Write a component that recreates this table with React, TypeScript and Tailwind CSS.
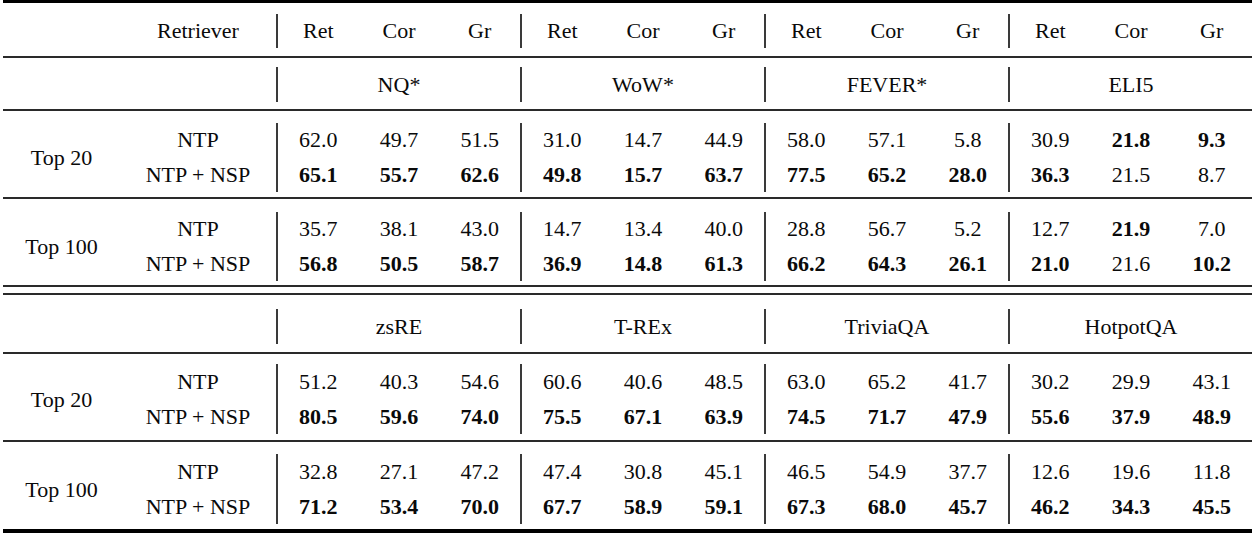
import React from "react";

type Row = string[];

const top20a: Row[] = [
  ["62.0", "49.7", "51.5", "31.0", "14.7", "44.9", "58.0", "57.1", "5.8", "30.9", "!21.8", "!9.3"],
  ["!65.1", "!55.7", "!62.6", "!49.8", "!15.7", "!63.7", "!77.5", "!65.2", "!28.0", "!36.3", "21.5", "8.7"],
];
const top100a: Row[] = [
  ["35.7", "38.1", "43.0", "14.7", "13.4", "40.0", "28.8", "56.7", "5.2", "12.7", "!21.9", "7.0"],
  ["!56.8", "!50.5", "!58.7", "!36.9", "!14.8", "!61.3", "!66.2", "!64.3", "!26.1", "!21.0", "21.6", "!10.2"],
];
const top20b: Row[] = [
  ["51.2", "40.3", "54.6", "60.6", "40.6", "48.5", "63.0", "65.2", "41.7", "30.2", "29.9", "43.1"],
  ["!80.5", "!59.6", "!74.0", "!75.5", "!67.1", "!63.9", "!74.5", "!71.7", "!47.9", "!55.6", "!37.9", "!48.9"],
];
const top100b: Row[] = [
  ["32.8", "27.1", "47.2", "47.4", "30.8", "45.1", "46.5", "54.9", "37.7", "12.6", "19.6", "11.8"],
  ["!71.2", "!53.4", "!70.0", "!67.7", "!58.9", "!59.1", "!67.3", "!68.0", "!45.7", "!46.2", "!34.3", "!45.5"],
];

function Rule({ cls }: { cls: string }) {
  return <div className={cls} />;
}

function Cell({ v }: { v: string }) {
  const bold = v.startsWith("!");
  return (
    <div className={"flex-1 text-center " + (bold ? "font-bold" : "")}>
      {bold ? v.slice(1) : v}
    </div>
  );
}

function Block({
  label,
  rows,
  pad,
  lh,
}: {
  label: string;
  rows: Row[];
  pad: string;
  lh: string;
}) {
  return (
    <div className={"flex " + pad}>
      <div className="w-[117px] flex items-center justify-center">{label}</div>
      <div className="w-[156px] flex flex-col">
        <div className={"text-center " + lh}>NTP</div>
        <div className={"text-center " + lh}>NTP + NSP</div>
      </div>
      {[0, 1, 2, 3].map((g) => (
        <div key={g} className="w-[244px] border-l-2 border-[#3a3a3a] flex flex-col">
          {rows.map((r, i) => (
            <div key={i} className={"flex " + lh}>
              {r.slice(g * 3, g * 3 + 3).map((v, j) => (
                <Cell key={j} v={v} />
              ))}
            </div>
          ))}
        </div>
      ))}
    </div>
  );
}

function NameRow({ names, pad }: { names: string[]; pad: string }) {
  return (
    <div className={"flex " + pad}>
      <div className="w-[273px]" />
      {names.map((n) => (
        <div key={n} className="w-[244px] border-l-2 border-[#3a3a3a] text-center leading-[35px]">
          {n}
        </div>
      ))}
    </div>
  );
}

export default function App() {
  return (
    <div
      className="w-[1255px] h-[533px] bg-white px-[3px] text-[22px] text-[#0a0a0a] overflow-hidden"
      style={{ fontFamily: '"Liberation Serif", "Times New Roman", serif' }}
    >
      <Rule cls="h-[3px] bg-black" />
      {/* header */}
      <div className="flex pt-[11px] pb-[8px]">
        <div className="w-[117px]" />
        <div className="w-[156px] text-center leading-[34px]">Retriever</div>
        {[0, 1, 2, 3].map((g) => (
          <div key={g} className="w-[244px] border-l-2 border-[#3a3a3a] flex leading-[34px]">
            <div className="flex-1 text-center">Ret</div>
            <div className="flex-1 text-center">Cor</div>
            <div className="flex-1 text-center">Gr</div>
          </div>
        ))}
      </div>
      <Rule cls="h-[2px] bg-[#2a2a2a]" />
      <NameRow names={["NQ*", "WoW*", "FEVER*", "ELI5"]} pad="pt-[9px] pb-[7px]" />
      <Rule cls="h-[2px] bg-[#2a2a2a]" />
      <Block label="Top 20" rows={top20a} pad="pt-[12px] pb-[5px]" lh="leading-[34.5px]" />
      <Rule cls="h-[2px] bg-[#2a2a2a]" />
      <Block label="Top 100" rows={top100a} pad="pt-[13px] pb-[4px]" lh="leading-[34.5px]" />
      <Rule cls="h-[2px] bg-[#2a2a2a]" />
      <div className="h-[6px]" />
      <Rule cls="h-[2px] bg-[#2a2a2a]" />
      <NameRow names={["zsRE", "T-REx", "TriviaQA", "HotpotQA"]} pad="pt-[14px] pb-[8px]" />
      <Rule cls="h-[2px] bg-[#2a2a2a]" />
      <Block label="Top 20" rows={top20b} pad="pt-[10px] pb-[6px]" lh="leading-[35px]" />
      <Rule cls="h-[2px] bg-[#2a2a2a]" />
      <Block label="Top 100" rows={top100b} pad="pt-[12px] pb-[5px]" lh="leading-[35px]" />
      <Rule cls="h-[4px] bg-black" />
    </div>
  );
}
